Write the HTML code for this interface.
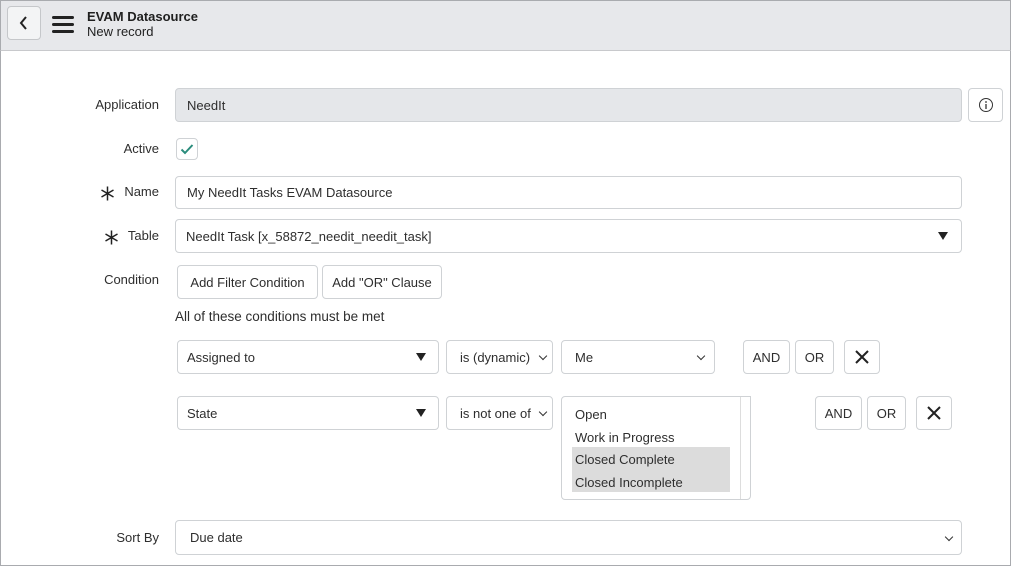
<!DOCTYPE html>
<html><head><meta charset="utf-8"><style>
*{box-sizing:border-box;margin:0;padding:0}
body{width:1011px;height:566px;overflow:hidden;background:#fff;font-family:"Liberation Sans",sans-serif;font-size:13px;color:#2e2e2e;position:relative}
.a{position:absolute}
.hdr{left:0;top:0;width:1011px;height:51px;background:#e7e8eb;border-bottom:1px solid #c8c9cc;border-left:1px solid #a9abaf;border-right:1px solid #a9abaf;border-top:1px solid #a9abaf}
.box{position:absolute;border:1px solid #cfd2d5;border-radius:4px;background:#fff;display:flex;align-items:center;padding-left:11px;font-size:13px}
.lbl{position:absolute;text-align:right;width:160px;left:0;font-size:13px}
.btn{position:absolute;border:1px solid #cfd2d5;border-radius:4px;background:#fff;display:flex;align-items:center;justify-content:center;font-size:13px}
.tri{position:absolute;right:12px;top:50%;margin-top:-4px;width:0;height:0;border-left:5px solid transparent;border-right:5px solid transparent;border-top:8px solid #222}
.chev{position:absolute;right:9px;top:50%;margin-top:-4px;width:6px;height:6px;border-right:1.3px solid #333;border-bottom:1.3px solid #333;transform:rotate(45deg)}
</style></head><body>
<div class="a hdr"></div>
<div class="a" style="left:0;top:51px;width:1px;height:515px;background:#a9abaf"></div>
<div class="a" style="left:1010px;top:51px;width:1px;height:515px;background:#a9abaf"></div>
<div class="a" style="left:0;top:565px;width:1011px;height:1px;background:#a9abaf"></div>
<div class="btn" style="left:7px;top:6px;width:34px;height:34px;background:#f3f4f5;border-color:#c5c7ca">
<svg width="12" height="16" viewBox="0 0 12 16"><path d="M8 2 L3 8 L8 14" fill="none" stroke="#222" stroke-width="2"/></svg></div>
<svg class="a" style="left:52px;top:16px" width="23" height="17" viewBox="0 0 23 17"><rect x="0" y="0" width="22" height="3" rx="1.5" fill="#222"/><rect x="0" y="7" width="22" height="3" rx="1.5" fill="#222"/><rect x="0" y="14" width="22" height="3" rx="1.5" fill="#222"/></svg>
<div class="a" style="left:87px;top:9px;font-weight:bold;font-size:13px;color:#1f1f1f">EVAM Datasource</div>
<div class="a" style="left:87px;top:24px;font-size:13px;color:#1f1f1f">New record</div>

<div class="lbl" style="top:97px;width:159px">Application</div>
<div class="box" style="left:175px;top:88px;width:787px;height:34px;background:#e5e7ea">NeedIt</div>
<div class="btn" style="left:968px;top:88px;width:35px;height:34px">
<svg width="16" height="16" viewBox="0 0 16 16"><circle cx="8" cy="8" r="6.5" fill="none" stroke="#333" stroke-width="1"/><circle cx="8" cy="5" r="0.9" fill="#333"/><path d="M8 7v5" stroke="#333" stroke-width="1.3"/></svg></div>

<div class="lbl" style="top:141px;width:159px">Active</div>
<div class="box" style="left:176px;top:138px;width:22px;height:22px;padding:0;justify-content:center">
<svg width="14" height="12" viewBox="0 0 14 12"><path d="M1.5 6.5 L5 10 L12.5 2" fill="none" stroke="#2a8c7c" stroke-width="2"/></svg></div>

<svg class="a" style="left:100px;top:186px" width="15" height="15" viewBox="0 0 15 15"><path d="M7.5 0.5V14.5M1.5 4L13.5 11M13.5 4L1.5 11" stroke="#222" stroke-width="1.5"/></svg>
<div class="lbl" style="top:184px;width:159px">Name</div>
<div class="box" style="left:175px;top:176px;width:787px;height:33px">My NeedIt Tasks EVAM Datasource</div>

<svg class="a" style="left:104px;top:230px" width="15" height="15" viewBox="0 0 15 15"><path d="M7.5 0.5V14.5M1.5 4L13.5 11M13.5 4L1.5 11" stroke="#222" stroke-width="1.5"/></svg>
<div class="lbl" style="top:228px;width:159px">Table</div>
<div class="box" style="left:175px;top:219px;width:787px;height:34px;padding-left:10px">NeedIt Task [x_58872_needit_needit_task]<div class="tri" style="right:13px"></div></div>

<div class="lbl" style="top:272px;width:159px">Condition</div>
<div class="btn" style="left:177px;top:265px;width:141px;height:34px">Add Filter Condition</div>
<div class="btn" style="left:322px;top:265px;width:120px;height:34px">Add "OR" Clause</div>
<div class="a" style="left:175px;top:309px;font-size:13.5px">All of these conditions must be met</div>

<div class="box" style="left:177px;top:340px;width:262px;height:34px;padding-left:9px">Assigned to<div class="tri"></div></div>
<div class="box" style="left:446px;top:340px;width:107px;height:34px;padding-left:13px">is (dynamic)<div class="chev" style="right:6px"></div></div>
<div class="box" style="left:561px;top:340px;width:154px;height:34px;padding-left:13px">Me<div class="chev" style="right:10px"></div></div>
<div class="btn" style="left:743px;top:340px;width:47px;height:34px">AND</div>
<div class="btn" style="left:795px;top:340px;width:39px;height:34px">OR</div>
<div class="btn" style="left:844px;top:340px;width:36px;height:34px"><svg width="14" height="14" viewBox="0 0 14 14"><path d="M1 1L13 13M13 1L1 13" stroke="#222" stroke-width="2"/></svg></div>

<div class="box" style="left:177px;top:396px;width:262px;height:34px;padding-left:9px">State<div class="tri"></div></div>
<div class="box" style="left:446px;top:396px;width:107px;height:34px;padding-left:13px">is not one of<div class="chev" style="right:6px"></div></div>
<div class="a" style="left:561px;top:396px;width:190px;height:104px;border:1px solid #cfd2d5;border-radius:4px 0 4px 4px">
<div class="a" style="left:178px;top:0;width:1px;height:102px;background:#ddd"></div>
<div class="a" style="left:10px;top:50px;width:158px;height:45px;background:#dcdcdc"></div>
<div class="a" style="left:13px;top:7px;line-height:22.5px">Open<br>Work in Progress<br>Closed Complete<br>Closed Incomplete</div>
</div>
<div class="btn" style="left:815px;top:396px;width:47px;height:34px">AND</div>
<div class="btn" style="left:867px;top:396px;width:39px;height:34px">OR</div>
<div class="btn" style="left:916px;top:396px;width:36px;height:34px"><svg width="14" height="14" viewBox="0 0 14 14"><path d="M1 1L13 13M13 1L1 13" stroke="#222" stroke-width="2"/></svg></div>

<div class="lbl" style="top:530px;width:159px">Sort By</div>
<div class="box" style="left:175px;top:520px;width:787px;height:35px;padding-left:14px">Due date<div class="chev" style="right:9px"></div></div>
</body></html>
